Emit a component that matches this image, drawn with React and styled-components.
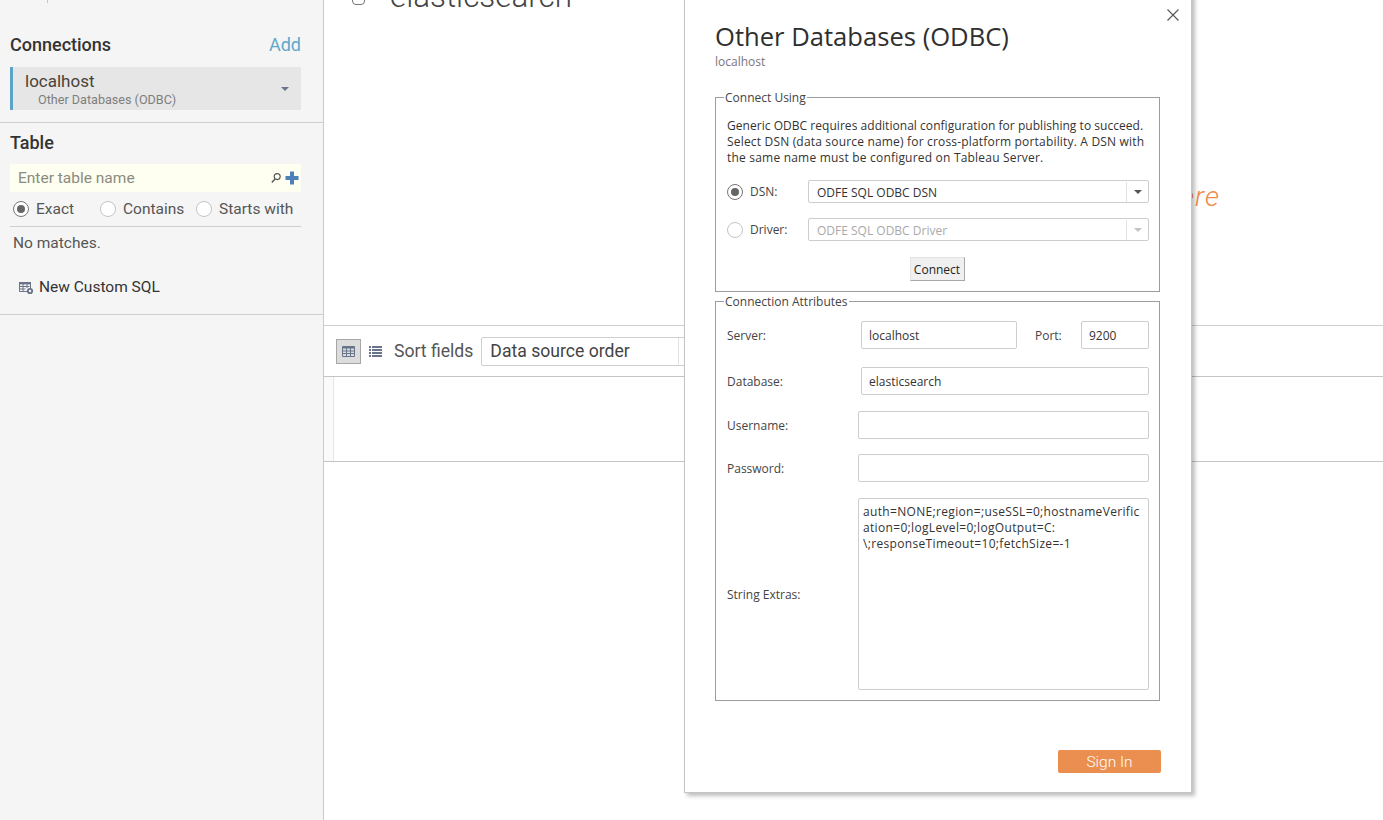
import React from "react";
import styled, { createGlobalStyle } from "styled-components";

const GlobalStyle = createGlobalStyle`
  html, body {
    margin: 0;
    height: 100%;
    overflow: hidden;
    background: #fff;
  }
  * {
    box-sizing: border-box;
  }
`;

const Page = styled.div`
  position: relative;
  display: grid;
  grid-template-columns: 324px 1fr;
  width: 1383px;
  height: 820px;
  overflow: hidden;
  font-family: Roboto, "Liberation Sans", sans-serif;
  color: #333;
`;

/* left data pane */
const Sidebar = styled.aside`
  display: flex;
  flex-direction: column;
  background: #f5f5f5;
  border-right: 1px solid #cbcbcb;
`;

const ConnectionsBlock = styled.section`
  height: 123px;
  padding: 0 22px 0 10px;
  border-bottom: 1px solid #cfcfcf;
`;

const Tick = styled.div`
  width: 1px;
  height: 3px;
  margin-left: 37px;
  background: #c8c8c8;
`;

const SectionHead = styled.div`
  display: flex;
  justify-content: space-between;
  align-items: center;
  height: 24px;
  margin-top: 29px;
`;

const SectionTitle = styled.h3`
  margin: 0;
  font-size: 18px;
  font-weight: 500;
  color: #333;
`;

const AddLink = styled.a`
  font-size: 18px;
  color: #5fa8cb;
`;

const ConnectionCard = styled.div`
  position: relative;
  height: 43px;
  margin-top: 11px;
  padding: 3px 0 0 12px;
  background: #e6e6e6;
  border-left: 3px solid #5ba4c7;
`;

const ConnectionName = styled.div`
  font-size: 17px;
  line-height: 22px;
  color: #4a4238;
`;

const ConnectionType = styled.div`
  margin-left: 13px;
  font-size: 12.6px;
  line-height: 16px;
  color: #7e7e7e;
`;

const CardCaret = styled.span`
  position: absolute;
  right: 12px;
  top: 20px;
  border-left: 4px solid transparent;
  border-right: 4px solid transparent;
  border-top: 4px solid #6a7488;
`;

const TableBlock = styled.section`
  height: 192px;
  padding: 0 22px 0 10px;
  border-bottom: 1px solid #cfcfcf;
`;

const TableTitle = styled(SectionTitle)`
  margin-top: 9px;
  line-height: 21px;
`;

const SearchBox = styled.div`
  display: flex;
  align-items: center;
  height: 28px;
  margin-top: 11px;
  padding: 0 2px 0 8px;
  background: #fefff0;
`;

const SearchText = styled.span`
  flex: 1;
  font-size: 15.500px;
  color: #8b8b80;
`;

const MatchOptions = styled.div`
  display: grid;
  grid-template-columns: 87px 96px auto;
  align-items: center;
  height: 35px;
  padding-left: 3px;
  border-bottom: 1px solid #cfcfcf;
`;

const MatchOption = styled.label`
  display: flex;
  align-items: center;
  gap: 7px;
  font-size: 15.500px;
  color: #555;
`;

const Radio = styled.span`
  display: inline-flex;
  justify-content: center;
  align-items: center;
  flex: none;
  width: 16px;
  height: 16px;
  border-radius: 50%;
  background: #fff;
  border: 1px solid ${(p) => (p.$checked ? "#777" : "#c4c4c4")};

  &::after {
    content: "";
    display: ${(p) => (p.$checked ? "block" : "none")};
    width: 8px;
    height: 8px;
    border-radius: 50%;
    background: #666;
  }
`;

const NoMatches = styled.div`
  padding: 7px 3px 0;
  font-size: 15.500px;
  line-height: 18px;
  color: #555;
`;

const CustomSql = styled.div`
  display: flex;
  align-items: center;
  gap: 5px;
  margin-top: 26px;
  padding-left: 8px;
  font-size: 15.500px;
  line-height: 18px;
  color: #333;
`;

/* main area behind the dialog */
const Main = styled.main`
  display: flex;
  flex-direction: column;
  min-width: 0;
`;

const Canvas = styled.div`
  height: 326px;
  overflow: hidden;
  border-bottom: 1px solid #cfcfcf;
`;

const SourceRow = styled.div`
  display: flex;
  align-items: flex-end;
  gap: 25px;
  height: 15px;
  padding-left: 28px;
`;

const SourceKnob = styled.span`
  flex: none;
  width: 13px;
  height: 10px;
  margin-bottom: 10px;
  border: 1px solid #777;
  border-radius: 4px;
`;

const SourceName = styled.div`
  font-size: 31.400px;
  font-weight: 300;
  line-height: 36px;
  color: #444;
`;

const DropHint = styled.div`
  margin-top: 167px;
  padding-right: 163px;
  text-align: right;
  font-size: 28px;
  font-style: italic;
  font-weight: 300;
  letter-spacing: 1px;
  line-height: 30px;
  color: #f28b4c;
`;

const SortBar = styled.div`
  display: flex;
  align-items: center;
  height: 51px;
  padding-left: 12px;
  border-bottom: 1px solid #c4c4c4;
`;

const ViewToggle = styled.span`
  display: flex;
  justify-content: center;
  align-items: center;
  width: 25px;
  height: 25px;
  margin-right: 2px;
  background: ${(p) => (p.$active ? "#dcdcdc" : "transparent")};
  border: 1px solid ${(p) => (p.$active ? "#a6a6a6" : "transparent")};
`;

const SortLabel = styled.span`
  margin-left: 4px;
  font-size: 17.600px;
  color: #555;
`;

const SortSelect = styled.div`
  display: flex;
  align-items: center;
  width: 240px;
  height: 29px;
  margin-left: 8px;
  font-size: 17.600px;
  color: #444;
  background: #fff;
  border: 1px solid #cfcfcf;
  border-radius: 2px;
`;

const SortValue = styled.span`
  display: flex;
  align-items: center;
  flex: none;
  width: 197px;
  height: 100%;
  padding-left: 8px;
  border-right: 1px solid #e2e2e2;
`;

const GridArea = styled.div`
  height: 85px;
  border-bottom: 1px solid #c4c4c4;
`;

const GridGutter = styled.div`
  width: 10px;
  height: 100%;
  background: #fafafa;
  border-right: 1px solid #e6e6e6;
`;

/* sign-in dialog */
const Dialog = styled.div`
  position: absolute;
  left: 684px;
  top: -10px;
  width: 508px;
  height: 803px;
  padding: 0 30px;
  background: #fff;
  border: 1px solid #c4c4c4;
  box-shadow: 3px 3px 4px rgba(0, 0, 0, 0.25);
  font-family: "Open Sans", "Noto Sans", sans-serif;
`;

const CloseButton = styled.button`
  position: absolute;
  right: 11px;
  top: 17px;
  display: flex;
  width: 14px;
  height: 14px;
  padding: 0;
  background: none;
  border: 0;
`;

const DialogTitle = styled.h1`
  margin: 28px 0 0;
  font-size: 25.600px;
  font-weight: 400;
  line-height: 36px;
  color: #2f2f2f;
`;

const DialogSub = styled.div`
  font-size: 12px;
  line-height: 14px;
  color: #7a7480;
`;

const Group = styled.fieldset`
  min-width: 0;
  height: ${(p) => p.$height}px;
  margin: ${(p) => p.$top}px 1px 0 0;
  padding: 0 10px 0 11px;
  border: 1px solid #9c9c9c;
`;

const GroupLegend = styled.legend`
  margin-left: -3px;
  padding: 2px 1px 0;
  font-size: 12px;
  line-height: 14px;
  color: #444;
`;

const Note = styled.div`
  margin-top: 13px;
  font-size: 12px;
  line-height: 16px;
  white-space: nowrap;
  color: #333;
`;

const NoteLine = styled.div`
  letter-spacing: ${(p) => p.$tracking}px;
`;

const SourceOption = styled.div`
  display: flex;
  align-items: center;
  height: 23px;
  margin-top: ${(p) => p.$top}px;
`;

const OptionLabel = styled.span`
  width: 58px;
  margin-left: 7px;
  font-size: 12px;
  color: #444;
`;

const Select = styled.div`
  display: flex;
  flex: 1;
  align-items: center;
  justify-content: space-between;
  height: 23px;
  padding: 1px 0 0 8px;
  font-size: 12px;
  color: ${(p) => (p.$disabled ? "#a9a9a9" : "#333")};
  border: 1px solid #cdcdcd;
  border-radius: 2px;
`;

const SelectArrow = styled.span`
  display: flex;
  justify-content: center;
  align-items: center;
  width: 22px;
  height: 100%;
  border-left: 1px solid #e2e2e2;

  &::after {
    content: "";
    border-left: 4px solid transparent;
    border-right: 4px solid transparent;
    border-top: 4px solid ${(p) => p.$color};
  }
`;

const ConnectRow = styled.div`
  display: flex;
  justify-content: center;
  margin-top: 16px;
  padding-right: 2px;
`;

const ConnectButton = styled.button`
  width: 55px;
  height: 24px;
  padding: 0;
  font-family: inherit;
  font-size: 12px;
  color: #222;
  background: #f0f0f0;
  border: 0;
  border-right: 1px solid #a8a8a8;
  border-bottom: 1px solid #a8a8a8;
  border-top: 1px solid #e4e4e4;
  border-left: 1px solid #e4e4e4;
`;

const FieldRow = styled.div`
  display: flex;
  align-items: center;
  height: ${(p) => p.$height || 28}px;
  margin-top: ${(p) => p.$top}px;
`;

const FieldLabel = styled.label`
  flex: none;
  width: ${(p) => p.$width}px;
  font-size: 12px;
  color: #444;
`;

const TextField = styled.input`
  flex: ${(p) => (p.$fixed ? "none" : 1)};
  width: ${(p) => (p.$fixed ? `${p.$fixed}px` : "auto")};
  min-width: 0;
  height: 100%;
  padding: 0 7px;
  font-family: inherit;
  font-size: 12px;
  color: #333;
  background: #fff;
  border: 1px solid #cdcdcd;
  border-radius: 2px;
  outline: none;
`;

const PortLabel = styled(FieldLabel)`
  margin-left: 18px;
`;

const Extras = styled.textarea`
  flex: 1;
  height: 100%;
  padding: 5px 4px;
  font-family: inherit;
  font-size: 12px;
  line-height: 16px;
  letter-spacing: 0.33px;
  color: #333;
  background: #fff;
  border: 1px solid #cdcdcd;
  border-radius: 2px;
  outline: none;
  resize: none;
  overflow: hidden;
  white-space: pre;
`;

const DialogFooter = styled.div`
  display: flex;
  justify-content: flex-end;
  margin-top: 49px;
`;

const SignIn = styled.button`
  width: 103px;
  height: 23px;
  padding: 0;
  font-family: Roboto, sans-serif;
  font-size: 15.500px;
  font-weight: 300;
  color: #fff;
  background: #eb8f50;
  border: 0;
  border-radius: 2px;
`;

const SearchIcon = () => (
  <svg width="12" height="12" viewBox="0 0 12 12" fill="none" stroke="#555" strokeWidth="1.1">
    <circle cx="7.2" cy="4.6" r="3" />
    <path d="M5 7 1.8 10.4" strokeWidth="1.4" />
  </svg>
);

const PlusIcon = () => (
  <svg width="14" height="14" viewBox="0 0 14 14" style={{ marginLeft: 3 }}>
    <path d="M5 .5h4V5h4.500v4H9v4.500H5V9H.5V5H5z" fill="#4f7fb8" />
  </svg>
);

const SqlIcon = () => (
  <svg width="16" height="15" viewBox="0 0 16 15" fill="none">
    <path d="M1.500 2.500h11v9h-11z" stroke="#6a7488" />
    <path d="M1 2h12v2.400H1z" fill="#6a7488" />
    <path d="M5 4v7.500M9 4v4M1.500 6.500h10M1.500 9h6" stroke="#6a7488" />
    <circle cx="12" cy="11" r="3.100" fill="#6a7488" />
    <circle cx="12" cy="11" r="1.200" fill="#f5f5f5" />
  </svg>
);

const GridIcon = () => (
  <svg width="13" height="11" viewBox="0 0 13 11" fill="none" stroke="#67748a">
    <path d="M.5.500h12v10H.5z" />
    <path d="M0 1.500h13" strokeWidth="2" />
    <path d="M4.500 2v8M8.500 2v8M1 5h11M1 7.500h11" />
  </svg>
);

const ListIcon = () => (
  <svg width="13" height="11" viewBox="0 0 13 11" fill="#67748a">
    <path d="M0 0h2v2H0zM3 0h10v2H3zM0 3h2v2H0zM3 3h10v2H3zM0 6h2v2H0zM3 6h10v2H3zM0 9h2v2H0zM3 9h10v2H3z" />
  </svg>
);

const CloseIcon = () => (
  <svg width="14" height="14" viewBox="0 0 14 14" stroke="#555" strokeWidth="1.1">
    <path d="M1.500 1.500l11 11M12.500 1.500l-11 11" />
  </svg>
);

const EXTRAS = "auth=NONE;region=;useSSL=0;hostnameVerific\nation=0;logLevel=0;logOutput=C:\n\\;responseTimeout=10;fetchSize=-1";

export default function App() {
  return (
    <Page>
      <GlobalStyle />
      <Sidebar>
        <ConnectionsBlock>
          <Tick />
          <SectionHead>
            <SectionTitle>Connections</SectionTitle>
            <AddLink>Add</AddLink>
          </SectionHead>
          <ConnectionCard>
            <ConnectionName>localhost</ConnectionName>
            <ConnectionType>Other Databases (ODBC)</ConnectionType>
            <CardCaret />
          </ConnectionCard>
        </ConnectionsBlock>
        <TableBlock>
          <TableTitle>Table</TableTitle>
          <SearchBox>
            <SearchText>Enter table name</SearchText>
            <SearchIcon />
            <PlusIcon />
          </SearchBox>
          <MatchOptions>
            <MatchOption><Radio $checked />Exact</MatchOption>
            <MatchOption><Radio />Contains</MatchOption>
            <MatchOption><Radio />Starts with</MatchOption>
          </MatchOptions>
          <NoMatches>No matches.</NoMatches>
          <CustomSql><SqlIcon />New Custom SQL</CustomSql>
        </TableBlock>
      </Sidebar>

      <Main>
        <Canvas>
          <SourceRow>
            <SourceKnob />
            <SourceName>elasticsearch</SourceName>
          </SourceRow>
          <DropHint>Drag tables here</DropHint>
        </Canvas>
        <SortBar>
          <ViewToggle $active><GridIcon /></ViewToggle>
          <ViewToggle><ListIcon /></ViewToggle>
          <SortLabel>Sort fields</SortLabel>
          <SortSelect><SortValue>Data source order</SortValue></SortSelect>
        </SortBar>
        <GridArea>
          <GridGutter />
        </GridArea>
      </Main>

      <Dialog>
        <CloseButton aria-label="Close"><CloseIcon /></CloseButton>
        <DialogTitle>Other Databases (ODBC)</DialogTitle>
        <DialogSub>localhost</DialogSub>

        <Group $height={203} $top={20}>
          <GroupLegend>Connect Using</GroupLegend>
          <Note>
            <NoteLine $tracking={0.04}>Generic ODBC requires additional configuration for publishing to succeed.</NoteLine>
            <NoteLine $tracking={0.18}>Select DSN (data source name) for cross-platform portability. A DSN with</NoteLine>
            <NoteLine $tracking={0.2}>the same name must be configured on Tableau Server.</NoteLine>
          </Note>
          <SourceOption $top={14}>
            <Radio $checked />
            <OptionLabel>DSN:</OptionLabel>
            <Select>
              ODFE SQL ODBC DSN
              <SelectArrow $color="#555" />
            </Select>
          </SourceOption>
          <SourceOption $top={15}>
            <Radio />
            <OptionLabel>Driver:</OptionLabel>
            <Select $disabled>
              ODFE SQL ODBC Driver
              <SelectArrow $color="#c4c4c4" />
            </Select>
          </SourceOption>
          <ConnectRow>
            <ConnectButton>Connect</ConnectButton>
          </ConnectRow>
        </Group>

        <Group $height={408} $top={1}>
          <GroupLegend>Connection Attributes</GroupLegend>
          <FieldRow $top={12}>
            <FieldLabel $width={134}>Server:</FieldLabel>
            <TextField $fixed={156} readOnly defaultValue="localhost" />
            <PortLabel $width={46}>Port:</PortLabel>
            <TextField readOnly defaultValue="9200" />
          </FieldRow>
          <FieldRow $top={18}>
            <FieldLabel $width={134}>Database:</FieldLabel>
            <TextField readOnly defaultValue="elasticsearch" />
          </FieldRow>
          <FieldRow $top={16}>
            <FieldLabel $width={131}>Username:</FieldLabel>
            <TextField readOnly />
          </FieldRow>
          <FieldRow $top={15}>
            <FieldLabel $width={131}>Password:</FieldLabel>
            <TextField readOnly />
          </FieldRow>
          <FieldRow $top={16} $height={192}>
            <FieldLabel $width={131}>String Extras:</FieldLabel>
            <Extras readOnly defaultValue={EXTRAS} />
          </FieldRow>
        </Group>

        <DialogFooter>
          <SignIn>Sign In</SignIn>
        </DialogFooter>
      </Dialog>
    </Page>
  );
}
